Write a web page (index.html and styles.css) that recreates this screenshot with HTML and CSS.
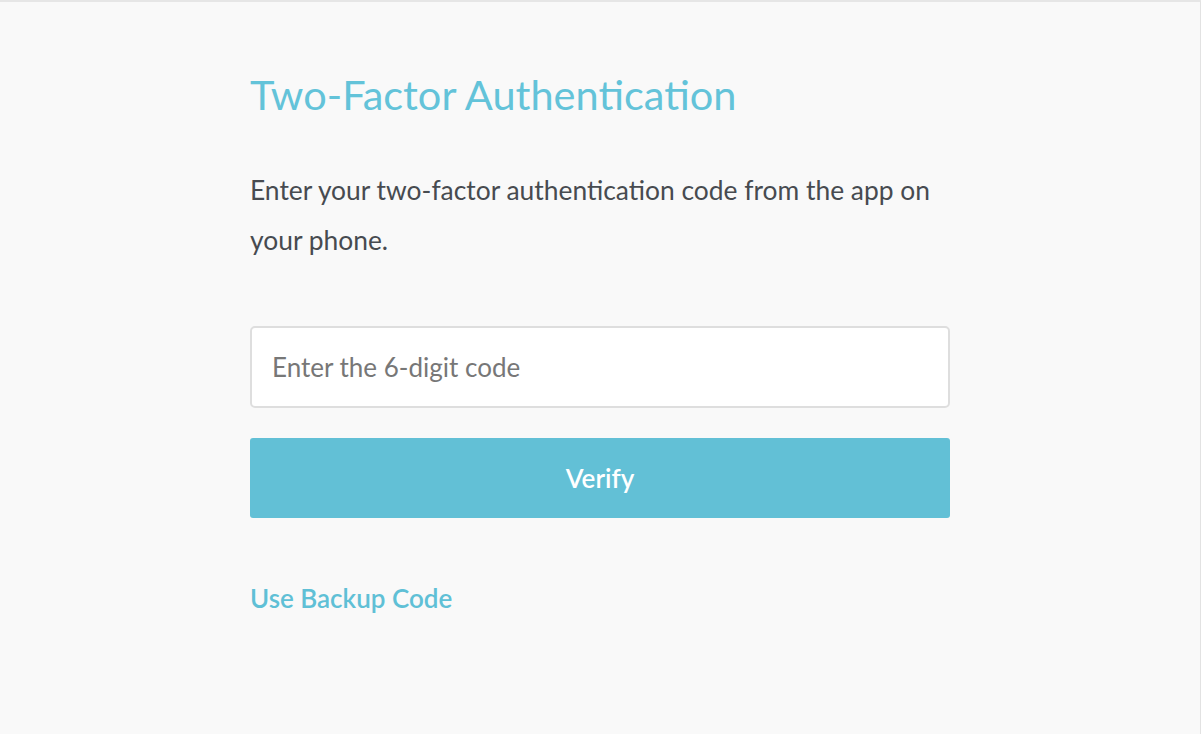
FILE: index.html
```html
<!DOCTYPE html>
<html>
<head>
    <title>Two-Factor Authentication</title>
    <link rel="stylesheet" href="styles.css">
</head>
<body>
    <div id="page">
        <div id="auth">
            <h1>Two-Factor Authentication</h1>
            <p class="intro">Enter your two-factor authentication code from the app on your phone.</p>
            <form id="verify-form">
                <input type="text" class="code-input" placeholder="Enter the 6-digit code">
                <button type="button" class="verify-button">Verify</button>
            </form>
            <a href="#" class="backup-link">Use Backup Code</a>
        </div>
    </div>
</body>
</html>
```

FILE: styles.css
```css
html, body {
    margin: 0;
    height: 100%;
}

body {
    font-family: Lato, "Open Sans", sans-serif;
    background: #fff;
}

#page {
    box-sizing: border-box;
    height: 734px;
    width: 1201px;
    background: #f9f9f9;
    border-top: 2px solid #e6e6e6;
    border-right: 1px solid #e2e2e2;
    padding-top: 67px;
}

#auth {
    width: 700px;
    margin-left: 250px;
}

h1 {
    margin: 0;
    font-size: 41.5px;
    font-weight: 400;
    color: #63c3d9;
    line-height: 50px;
}

.intro {
    margin: 46px 0 0;
    font-size: 26.4px;
    line-height: 50px;
    color: #474b50;
}

#verify-form {
    margin-top: 61px;
}

.code-input {
    display: block;
    box-sizing: border-box;
    width: 700px;
    height: 82px;
    border: 2px solid #dedede;
    border-radius: 5px;
    background: #fff;
    padding: 0 20px;
    font-family: inherit;
    font-size: 26px;
    color: #333;
    outline: none;
}

.code-input::placeholder {
    color: #777;
}

.verify-button {
    display: block;
    width: 700px;
    height: 80px;
    margin-top: 30px;
    border: none;
    border-radius: 3px;
    background: #62c0d6;
    color: #fff;
    font-family: inherit;
    font-size: 26px;
    font-weight: 600;
}

.backup-link {
    display: inline-block;
    margin-top: 64px;
    font-size: 26px;
    line-height: 32px;
    font-weight: 600;
    color: #5fc0d6;
    text-decoration: none;
}
```
